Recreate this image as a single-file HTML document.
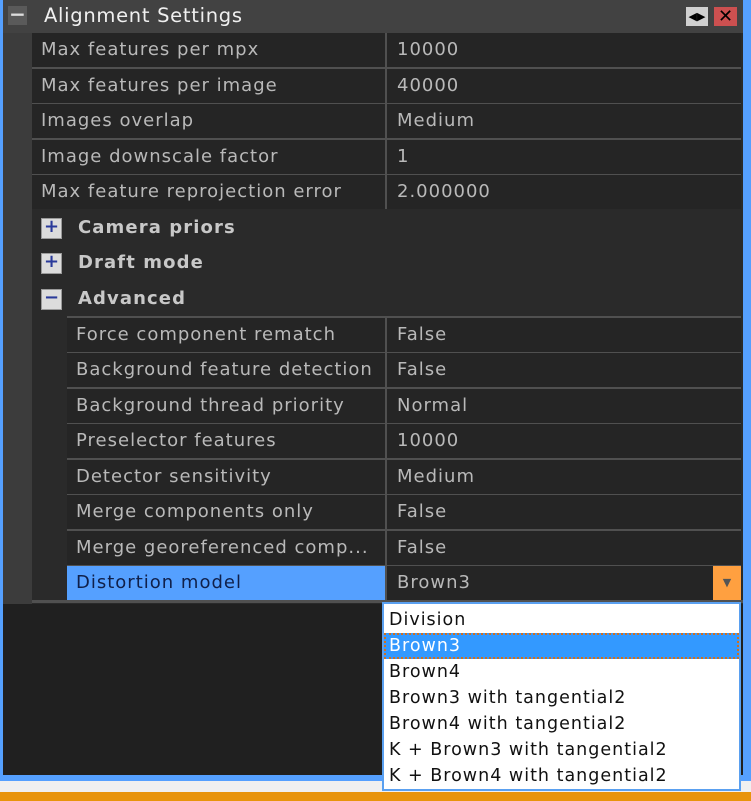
<!DOCTYPE html>
<html><head><style>
body{margin:0;width:751px;height:801px;overflow:hidden;background:#202020;font-family:"DejaVu Sans",sans-serif;position:relative}
div{box-sizing:border-box}
.a{position:absolute}
.row{position:absolute;height:34px;color:#b9b9b9;font-size:18px;letter-spacing:1px;line-height:34px;white-space:nowrap;overflow:hidden}
.lab{background:#252525;padding-left:9px}
.val{background:#252525;padding-left:10px;left:387px;width:354px}
.sec{position:absolute;left:41px;color:#c8c8c8;font-weight:bold;font-size:18px;letter-spacing:1.1px;height:24px;line-height:24px;white-space:nowrap}
.box{display:inline-block;width:19px;height:19px;background:#dcdcdc;border:1px solid #9a9a9a;color:#2a3a9a;font-size:18px;line-height:16px;text-align:center;vertical-align:middle;margin-right:16px;font-weight:bold;letter-spacing:0}
.it{height:26px;line-height:26px;padding-left:5px;font-size:17.5px;letter-spacing:1px;color:#111;white-space:nowrap}
</style></head><body>
<div class="a" style="left:0;top:0;width:3px;height:781px;background:#55a0ff"></div>
<div class="a" style="left:743px;top:0;width:8px;height:781px;background:#55a0ff"></div>
<div class="a" style="left:3px;top:0;width:740px;height:604px;background:#2a2a2a"></div>
<div class="a" style="left:3px;top:0;width:29px;height:604px;background:#3c3c3c"></div>
<div class="a" style="left:3px;top:0;width:740px;height:33px;background:#424242"></div>
<div class="a" style="left:8px;top:6px;width:19px;height:19px;background:#5a5a5a;color:#ddd;font-size:20px;line-height:17px;text-align:center;font-weight:bold">−</div>
<div class="a" style="left:44px;top:4px;color:#f0f0f0;font-size:19.5px;letter-spacing:0.7px;white-space:nowrap">Alignment Settings</div>
<div class="a" style="left:686px;top:7px;width:22px;height:19px;background:#d0d0d0;font-size:11px;line-height:19px;text-align:center;color:#000">◀▶</div>
<div class="a" style="left:714px;top:7px;width:23px;height:19px;background:#cc5050;color:#000;font-weight:bold;font-size:18px;line-height:19px;text-align:center">✕</div>
<div class="a" style="left:32px;top:33px;width:709px;height:176px;background:#505050"></div>
<div class="row lab" style="left:32px;top:33px;width:353px">Max features per mpx</div><div class="row val" style="top:33px">10000</div>
<div class="row lab" style="left:32px;top:69px;width:353px">Max features per image</div><div class="row val" style="top:69px">40000</div>
<div class="row lab" style="left:32px;top:104px;width:353px">Images overlap</div><div class="row val" style="top:104px">Medium</div>
<div class="row lab" style="left:32px;top:140px;width:353px">Image downscale factor</div><div class="row val" style="top:140px">1</div>
<div class="row lab" style="left:32px;top:175px;width:353px">Max feature reprojection error</div><div class="row val" style="top:175px">2.000000</div>
<div class="sec" style="top:216px"><span class="box">+</span>Camera priors</div>
<div class="sec" style="top:251px"><span class="box">+</span>Draft mode</div>
<div class="sec" style="top:287px"><span class="box">−</span>Advanced</div>
<div class="a" style="left:67px;top:316px;width:674px;height:285px;background:#505050"></div>
<div class="row lab" style="left:67px;top:318px;width:318px">Force component rematch</div><div class="row val" style="top:318px">False</div>
<div class="row lab" style="left:67px;top:353px;width:318px">Background feature detection</div><div class="row val" style="top:353px">False</div>
<div class="row lab" style="left:67px;top:389px;width:318px">Background thread priority</div><div class="row val" style="top:389px">Normal</div>
<div class="row lab" style="left:67px;top:424px;width:318px">Preselector features</div><div class="row val" style="top:424px">10000</div>
<div class="row lab" style="left:67px;top:460px;width:318px">Detector sensitivity</div><div class="row val" style="top:460px">Medium</div>
<div class="row lab" style="left:67px;top:495px;width:318px">Merge components only</div><div class="row val" style="top:495px">False</div>
<div class="row lab" style="left:67px;top:531px;width:318px">Merge georeferenced comp...</div><div class="row val" style="top:531px">False</div>
<div class="row lab" style="left:67px;top:566px;width:318px;background:#55a0ff;color:#10204a">Distortion model</div><div class="row val" style="top:566px;border-right:1px solid #2a6ad0">Brown3</div>
<div class="a" style="left:713px;top:566px;width:28px;height:34px;background:#ffa040;color:#555;font-size:11px;text-align:center;line-height:34px">▼</div>
<div class="a" style="left:32px;top:600px;width:711px;height:3px;background:#505050"></div>
<div class="a" style="left:3px;top:775px;width:740px;height:6px;background:#55a0ff"></div>
<div class="a" style="left:0;top:781px;width:751px;height:11px;background:#f0f0f0"></div>
<div class="a" style="left:0;top:792px;width:751px;height:9px;background:#e8940c"></div>
<div class="a" style="left:382px;top:602px;width:359px;height:189px;background:#fff;border:2px solid #5aa0f0;padding-top:3px">
<div class="it">Division</div>
<div class="it" style="background:#3399ff;color:#fff;outline:2px dotted #d07020;outline-offset:-2px">Brown3</div>
<div class="it">Brown4</div>
<div class="it">Brown3 with tangential2</div>
<div class="it">Brown4 with tangential2</div>
<div class="it">K + Brown3 with tangential2</div>
<div class="it">K + Brown4 with tangential2</div>
</div>
</body></html>
